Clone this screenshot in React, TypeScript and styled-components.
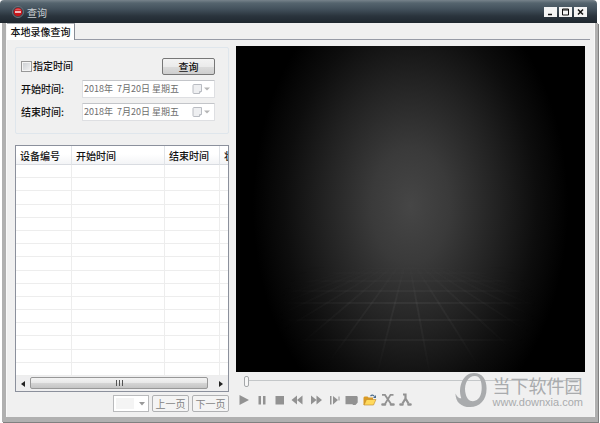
import React, { useState } from "react";
import styled, { createGlobalStyle } from "styled-components";

const Global = createGlobalStyle`
  * { box-sizing: border-box; }
  body { margin: 0; background: #fff; }
  body, button, input, select, table {
    font-family: "Noto Sans CJK SC", "Noto Sans", sans-serif;
    font-size: 10px;
    line-height: 14px;
    color: #111;
  }
  button { padding: 0; cursor: default; }
  svg { display: block; }
`;

const Window = styled.div`
  position: relative;
  min-height: 100vh;
  display: flex;
  flex-direction: column;
`;

const TitleBar = styled.header`
  height: 23px;
  margin-right: 3px;
  padding: 0 10px 0 12px;
  display: flex;
  align-items: center;
  gap: 3px;
  border-radius: 4px 4px 0 0;
  background: linear-gradient(#77838b 0, #55646e 3px, #43515c 9px, #2a343d 16px, #1f272f 100%);
`;

const Title = styled.h1`
  margin: 3px 0 0;
  flex: 1;
  font-size: 10px;
  font-weight: 400;
  color: #c9ced2;
`;

const WindowButton = styled.button`
  width: 13px;
  height: 10px;
  border: 0;
  background: #f4f4f4;
  display: grid;
  place-items: center;
`;

const WindowButtons = styled.div`
  display: flex;
  gap: 2px;
`;

const Frame = styled.main`
  flex: 1;
  display: flex;
  flex-direction: column;
  margin: 0 2px 1px;
  border: solid #b0b0b0;
  border-width: 0 3px 5px 4px;
  box-shadow: 1px 1px #808080, inset 1px 0 #f8f8f8, inset -1px 0 #f8f8f8;
  background: #f0f0f0;
`;

const TabBar = styled.div`
  display: flex;
  height: 17px;
  margin: 0 5px 0 1px;
`;

const Tab = styled.button`
  width: 68px;
  border: 0;
  border-right: 1px solid #888c95;
  border-top: 1px solid #aaadb2;
  background: #fff;
  font-weight: 500;
`;

const TabRest = styled.div`
  flex: 1;
  border-bottom: 1px solid #979ba6;
`;

const Content = styled.div`
  flex: 1;
  display: grid;
  grid-template-columns: 214px minmax(0, 1fr);
  gap: 7px;
  padding: 6px 10px 5px 9px;
`;

const Side = styled.section`
  display: flex;
  flex-direction: column;
  min-height: 0;
`;

const Filter = styled.form`
  height: 87px;
  margin-top: 1px;
  padding: 9px 13px 0 5px;
  border: 1px solid #dfe6ec;
  border-radius: 2px;
  display: flex;
  flex-direction: column;
  gap: 5px;
`;

const FilterRow = styled.div`
  display: flex;
  align-items: center;
  justify-content: space-between;
  height: 18px;
`;

const Label = styled.label`
  display: flex;
  align-items: center;
  gap: 1px;
  font-weight: 500;
`;

const CheckBox = styled.input`
  appearance: none;
  width: 11px;
  height: 11px;
  margin: 0;
  border: 1px solid #989898;
  background: linear-gradient(135deg, #c9ccd0, #f4f4f4);
  box-shadow: inset 0 0 0 1px #f4f4f4;
  &:checked { background: #4a6a8a; }
`;

const QueryButton = styled.button`
  width: 53px;
  height: 17px;
  border: 1px solid #777;
  border-radius: 2px;
  background: linear-gradient(#f3f3f3 0, #ebebeb 50%, #dcdcdc 50%, #cecece 100%);
  font-weight: 500;
  line-height: 15px;
`;

const DateField = styled.div`
  width: 133px;
  height: 18px;
  display: flex;
  align-items: center;
  border: 1px solid #dedfe2;
  border-top-color: #c3c5c9;
  border-radius: 1px;
  background: #fff;
`;

const DateInput = styled.input`
  flex: 1;
  min-width: 0;
  border: 0;
  padding: 0 1px;
  background: none;
  color: #6d6d6d;
  font-size: 9px;
  white-space: pre;
`;

const CalendarButton = styled.button`
  width: 23px;
  height: 16px;
  border: 0;
  background: none;
`;

const ListBox = styled.div`
  flex: 1;
  min-height: 0;
  margin-top: 11px;
  border: 1px solid #8b909c;
  background: #fff;
  display: flex;
  flex-direction: column;
  overflow: hidden;
`;

const Table = styled.table`
  flex: 1;
  width: 100%;
  height: 230px;
  table-layout: fixed;
  border-collapse: separate;
  border-spacing: 0;
`;

const HeadCell = styled.th<{ $width?: number }>`
  width: ${(p) => (p.$width ? `${p.$width}px` : "auto")};
  height: 19px;
  padding: 1px 0 0 4px;
  text-align: left;
  font-weight: 500;
  white-space: nowrap;
  overflow: hidden;
  border-right: 1px solid #e1e4e8;
  border-bottom: 1px solid #d9dce1;
  background: linear-gradient(#fff 45%, #f3f4f6);
  &:last-child { border-right: 0; }
`;

const Cell = styled.td`
  padding: 0;
  border-right: 1px solid #ededed;
  border-bottom: 1px solid #ededed;
  &:last-child { border-right: 0; }
`;

const ScrollBar = styled.div`
  height: 15px;
  display: flex;
  align-items: stretch;
  background: #eeeeef;
`;

const ScrollArrow = styled.button`
  width: 14px;
  border: 0;
  background: none;
  display: grid;
  place-items: center;
`;

const ScrollTrack = styled.div`
  flex: 1;
  padding: 1px 6px 2px 0;
`;

const ScrollThumb = styled.div`
  height: 100%;
  border: 1px solid #989898;
  border-radius: 2px;
  background: linear-gradient(#f4f4f4 0, #e8e8e8 48%, #d6d6d6 50%, #c4c4c4 100%);
  display: grid;
  place-items: center;
`;

const Pager = styled.nav`
  display: flex;
  justify-content: flex-end;
  gap: 3px;
  height: 17px;
  margin-top: 3px;
`;

const PageSelectBox = styled.div`
  display: flex;
  align-items: center;
  width: 36px;
  border: 1px solid #b9babc;
  background: #fff;
  padding-right: 3px;
`;

const PageSelect = styled.select`
  appearance: none;
  flex: 1;
  min-width: 0;
  height: 11px;
  margin: 0 5px 0 2px;
  border: 0;
  background: #f0f0f0;
`;

const PageButton = styled.button`
  width: 37px;
  border: 1px solid #b0b1b3;
  border-radius: 2px;
  background: #f4f4f4;
  color: #838383;
  line-height: 15px;
`;

const Player = styled.section`
  display: flex;
  flex-direction: column;
  min-width: 0;
`;

const Screen = styled.div`
  flex: 1;
  contain: size;
  display: flex;
  background: #000;
  svg { width: 100%; height: 100%; }
`;

const Seek = styled.input`
  appearance: none;
  width: calc(100% - 12px);
  height: 12px;
  margin: 3px 4px 0 8px;
  background: linear-gradient(#c4c7c9, #c4c7c9) 0 5px / 100% 1px no-repeat;
  &::-webkit-slider-thumb {
    appearance: none;
    width: 5px;
    height: 11px;
    border: 1px solid #a4a7a9;
    border-radius: 2px;
    background: #f7f7f7;
  }
`;

const Controls = styled.div`
  display: flex;
  height: 18px;
  margin: 4px 0 3px -1px;
`;

const ControlButton = styled.button`
  width: 18px;
  border: 0;
  background: none;
  color: #929292;
  display: grid;
  place-items: center;
`;

const Watermark = styled.div`
  position: absolute;
  right: 17px;
  bottom: 15px;
  display: flex;
  align-items: flex-end;
  gap: 5px;
  color: #a9abad;
  pointer-events: none;
`;

const WatermarkText = styled.div`
  font-size: 18px;
  line-height: 22px;
`;

const WatermarkUrl = styled.div`
  font-family: "Liberation Sans", sans-serif;
  font-size: 11px;
  line-height: 12px;
`;

const AppIcon = () => (
  <svg width="12" height="12" viewBox="0 0 12 12">
    <circle cx="6" cy="6" r="5.5" fill="#39434c" stroke="#69747d" />
    <circle cx="6" cy="6" r="4.3" fill="#c5161b" />
    <path d="M2.5 4.2a4 3.4 0 0 1 7 0z" fill="#e0575b" />
    <path d="M3 5.3h6v1.4H3z" fill="#fff" />
  </svg>
);

const DateIcon = () => (
  <svg width="20" height="12" viewBox="0 0 20 12">
    <path d="M2 2.5Q2 1.5 3 1.500h7.500v7L8.500 10.500H3Q2 10.500 2 9.500z" fill="#eeeff1" stroke="#b9bcc2" />
    <path d="M8.500 10.500v-2h2" fill="#fff" stroke="#b9bcc2" />
    <path d="M13 4.500h6l-3 3z" fill="#b5b5b5" />
  </svg>
);

const verticals = [-410, -356, -302, -248, -194, -140, -86, -30, 22, 75, 129, 183, 237, 291, 345, 400];
const horizontals = [222, 227, 235, 245, 257, 274, 294];

const Scene = () => (
  <svg viewBox="0 0 350 326" preserveAspectRatio="none" role="img" aria-label="视频">
    <defs>
      <radialGradient id="glow" gradientUnits="userSpaceOnUse" cx="0" cy="0" r="1" gradientTransform="translate(175 160) scale(158 230)">
        <stop offset="0" stopColor="#464646" />
        <stop offset=".25" stopColor="#3a3a3a" />
        <stop offset=".55" stopColor="#222" />
        <stop offset=".8" stopColor="#0d0d0d" />
        <stop offset="1" stopColor="#000" />
      </radialGradient>
      <radialGradient id="fade" gradientUnits="userSpaceOnUse" cx="0" cy="0" r="1" gradientTransform="translate(172 262) scale(130 72)">
        <stop offset="0" stopColor="#fff" />
        <stop offset=".5" stopColor="#999" />
        <stop offset="1" stopColor="#000" />
      </radialGradient>
      <linearGradient id="horizon" x1="0" y1="0" x2="0" y2="1">
        <stop offset="0" stopColor="#000" />
        <stop offset=".35" stopColor="#000" stopOpacity="0" />
      </linearGradient>
      <mask id="floor">
        <rect y="215" width="350" height="111" fill="url(#fade)" />
        <rect y="215" width="350" height="111" fill="url(#horizon)" />
      </mask>
    </defs>
    <rect width="350" height="326" fill="url(#glow)" />
    <g mask="url(#floor)" fill="none" stroke="#8a8a8a">
      <g strokeOpacity=".26">
        {horizontals.map((y) => (
          <path key={y} d={`M0 ${y}H350`} />
        ))}
      </g>
      <g strokeOpacity=".1" strokeWidth="2">
        {verticals.map((x) => (
          <path key={x} d={`M${172 + x * 0.13} 223L${172 + x} 326`} />
        ))}
      </g>
    </g>
  </svg>
);

const glyph = (children: React.ReactNode) => (
  <svg width="14" height="14" viewBox="0 0 14 14" fill="currentColor">{children}</svg>
);

const controls = [
  { name: "播放", icon: glyph(<path d="M2.500 2 12 7l-9.500 5z" />) },
  { name: "暂停", icon: glyph(<path d="M3.500 3H6v8.500H3.500zM8 3h2.500v8.500H8z" />) },
  { name: "停止", icon: glyph(<path d="M2.500 3H11v8.500H2.500z" />) },
  { name: "快退", icon: glyph(<path d="M6 2.500v9L.5 7zM11.500 2.500v9L6 7z" />) },
  { name: "快进", icon: glyph(<path d="M2 2.500 7.500 7 2 11.500zM7.500 2.500 13 7l-5.500 4.500z" />) },
  { name: "单帧", icon: glyph(<path d="M3 3h1.500v8.500H3zM6 3l5 4-5 4.500zM11.500 3.500h1v4h-1z" />) },
  { name: "截图", icon: glyph(<path d="M.5 3H12l.7 1v5.500L10.500 12H8l-.5-.7H.5z" />) },
  {
    name: "打开",
    icon: glyph(
      <>
        <path d="M.5 4.500 1.500 3.500h3l1 1h4.500V12H.5z" fill="#d99a25" />
        <path d="M3.500 6.500H13L10.500 12H1z" fill="#ffd95c" stroke="#bd872a" strokeWidth=".6" />
        <path d="M7.500 3q2-2 4 .5" fill="none" stroke="#4c6c8c" strokeWidth="1.100" />
        <path d="M13 2v3h-3z" fill="#4c6c8c" />
      </>
    ),
  },
  {
    name: "剪切",
    icon: glyph(
      <g fill="none" stroke="currentColor" strokeWidth="1.800">
        <path d="M1 1.900h3L10 11M12.500 1.900H9.500L4 11" />
        <path d="M1.500 11.500h2.500M10 11.500h2.500" strokeWidth="2.600" strokeLinecap="round" />
      </g>
    ),
  },
  {
    name: "结束剪切",
    icon: glyph(
      <g fill="none" stroke="currentColor" strokeWidth="1.800">
        <path d="M4 1.500h2.500v4L3.500 10.500M6.500 5.500 9.500 10.500" strokeWidth="2.200" />
        <path d="M1.500 11.500h2M9.500 11.500h2" strokeWidth="2.600" strokeLinecap="round" />
      </g>
    ),
  },
];

const dates = [
  { id: "start", label: "开始时间:" },
  { id: "end", label: "结束时间:" },
];

export default function App() {
  const [limited, setLimited] = useState(false);
  return (
    <Window>
      <Global />
      <TitleBar>
        <AppIcon />
        <Title>查询</Title>
        <WindowButtons>
          <WindowButton aria-label="最小化">
            <svg width="9" height="8"><path d="M2 6.500h4" stroke="#111" strokeWidth="1.500" /></svg>
          </WindowButton>
          <WindowButton aria-label="最大化">
            <svg width="9" height="8"><path d="M1.500 1h6v6h-6zM1.500 2h6" fill="none" stroke="#111" /></svg>
          </WindowButton>
          <WindowButton aria-label="关闭">
            <svg width="9" height="8"><path d="M2 1.500 7 6.500M7 1.500 2 6.500" stroke="#111" strokeWidth="1.500" /></svg>
          </WindowButton>
        </WindowButtons>
      </TitleBar>
      <Frame>
        <TabBar role="tablist">
          <Tab role="tab" aria-selected="true">本地录像查询</Tab>
          <TabRest />
        </TabBar>
        <Content>
          <Side>
            <Filter onSubmit={(e) => e.preventDefault()}>
              <FilterRow>
                <Label>
                  <CheckBox type="checkbox" checked={limited} onChange={(e) => setLimited(e.target.checked)} />
                  指定时间
                </Label>
                <QueryButton>查询</QueryButton>
              </FilterRow>
              {dates.map((d) => (
                <FilterRow key={d.id}>
                  <Label htmlFor={d.id}>{d.label}</Label>
                  <DateField>
                    <DateInput id={d.id} disabled={!limited} defaultValue="2018年  7月20日 星期五" />
                    <CalendarButton type="button" aria-label="选择日期" disabled={!limited}><DateIcon /></CalendarButton>
                  </DateField>
                </FilterRow>
              ))}
            </Filter>
            <ListBox>
              <Table>
                <thead>
                  <tr>
                    <HeadCell $width={56}>设备编号</HeadCell>
                    <HeadCell $width={93}>开始时间</HeadCell>
                    <HeadCell $width={55}>结束时间</HeadCell>
                    <HeadCell>状态</HeadCell>
                  </tr>
                </thead>
                <tbody>
                  {Array.from({ length: 16 }, (_, i) => (
                    <tr key={i}><Cell /><Cell /><Cell /><Cell /></tr>
                  ))}
                </tbody>
              </Table>
              <ScrollBar>
                <ScrollArrow aria-label="向左"><svg width="4" height="6"><path d="M4 0v6L0 3z" fill="#222" /></svg></ScrollArrow>
                <ScrollTrack>
                  <ScrollThumb>
                    <svg width="8" height="6"><path d="M1.500 0v6M4.500 0v6M7.500 0v6" stroke="#555" /></svg>
                  </ScrollThumb>
                </ScrollTrack>
                <ScrollArrow aria-label="向右"><svg width="4" height="6"><path d="M0 0v6l4-3z" fill="#222" /></svg></ScrollArrow>
              </ScrollBar>
            </ListBox>
            <Pager>
              <PageSelectBox>
                <PageSelect aria-label="页码" disabled />
                <svg width="6" height="4"><path d="M0 0h6L3 3.500z" fill="#999" /></svg>
              </PageSelectBox>
              <PageButton disabled>上一页</PageButton>
              <PageButton disabled>下一页</PageButton>
            </Pager>
          </Side>
          <Player>
            <Screen><Scene /></Screen>
            <Seek type="range" aria-label="播放进度" min="0" max="100" defaultValue="0" />
            <Controls>
              {controls.map((c) => (
                <ControlButton key={c.name} aria-label={c.name}>{c.icon}</ControlButton>
              ))}
            </Controls>
          </Player>
        </Content>
      </Frame>
      <Watermark>
        <svg width="33" height="35" viewBox="0 0 33 36" fill="currentColor">
          <path fillRule="evenodd" d="M19 0C28 0 32 7 32 16c0 12-7 19-17 19C6 35 0 30 0 21c2 4 4 5 6 5C2 14 8 0 19 0zm1 3c-7 0-11 8-10 16 1 7 4 10 8 10 6 0 9-6 9-14 0-7-2-12-7-12z" />
        </svg>
        <div>
          <WatermarkText>当下软件园</WatermarkText>
          <WatermarkUrl>www.downxia.com</WatermarkUrl>
        </div>
      </Watermark>
    </Window>
  );
}
